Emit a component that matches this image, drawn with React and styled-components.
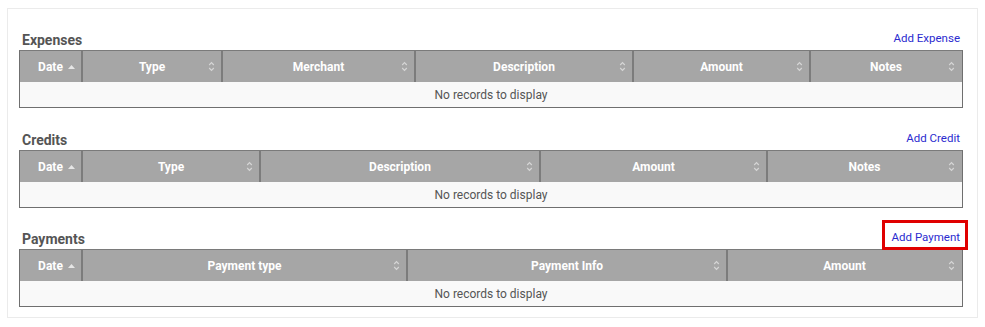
import React from "react";
import styled, { createGlobalStyle } from "styled-components";

const GlobalStyle = createGlobalStyle`
  body {
    margin: 0;
    background: #fff;
    font-family: Roboto, "Liberation Sans", Arial, sans-serif;
  }
`;

const Panel = styled.div`
  box-sizing: border-box;
  width: 971px;
  height: 310px;
  margin: 8px 0 0 7px;
  padding: 21px 14px 10px 11px;
  border: 1px solid #ebebeb;
  display: flex;
  flex-direction: column;
`;

const Section = styled.section`
  display: flex;
  flex-direction: column;
  margin-top: ${(p) => p.$gap || 0}px;
`;

const TitleRow = styled.div`
  display: flex;
  justify-content: space-between;
  align-items: flex-end;
  height: 20px;
  padding: 0 3px 0 3px;
`;

const Title = styled.h3`
  margin: 0 0 2px;
  font-size: 14px;
  font-weight: 700;
  color: #555;
  line-height: 15px;
`;

const AddLink = styled.a`
  position: relative;
  font-size: 11.5px;
  color: #2b2bcf;
  text-decoration: none;
  line-height: 14px;
  margin-bottom: 5px;
  cursor: pointer;
  ${(p) =>
    p.$highlighted &&
    `
    &::after {
      content: "";
      position: absolute;
      inset: -10px -8px -6px -10px;
      border: 3px solid #e00000;
      pointer-events: none;
    }
  `}
`;

const Table = styled.div`
  border: 1px solid #6f6f6f;
  border-top-color: #7a7a7a;
`;

const HeadRow = styled.div`
  display: grid;
  grid-template-columns: ${(p) => p.$cols};
  height: 31px;
  background: #a6a6a6;
`;

const Th = styled.div`
  display: grid;
  grid-template-columns: 1fr auto 1fr;
  align-items: center;
  padding: 0 6px 0 6px;
  border-left: 2px solid #7c7c7c;
  color: #fff;
  font-size: 12px;
  font-weight: 700;
  &:first-child {
    border-left: none;
  }
`;

const ThIcon = styled.span`
  justify-self: end;
  display: flex;
  align-items: center;
`;

const Empty = styled.div`
  height: 25px;
  background: #f9f9f9;
  color: #555;
  font-size: 12px;
  display: flex;
  align-items: center;
  justify-content: center;
`;

const SortAsc = () => (
  <svg width="7" height="4" viewBox="0 0 7 4">
    <path d="M0 4 L3.5 0 L7 4 Z" fill="#e6e6e6" />
  </svg>
);

const SortBoth = () => (
  <svg width="7" height="11" viewBox="0 0 7 11">
    <path
      d="M1.2 4 L3.5 1.7 L5.8 4 M1.2 7 L3.5 9.3 L5.8 7"
      fill="none"
      stroke="#d6d6d6"
      strokeWidth="1.2"
    />
  </svg>
);

const GridTable = ({ columns }) => (
  <Table>
    <HeadRow $cols={columns.map((c) => `${c.w}px`).join(" ")}>
      {columns.map((c, i) => (
        <Th key={c.label}>
          <span />
          <span>{c.label}</span>
          <ThIcon>{i === 0 ? <SortAsc /> : <SortBoth />}</ThIcon>
        </Th>
      ))}
    </HeadRow>
    <Empty>No records to display</Empty>
  </Table>
);

const sections = [
  {
    title: "Expenses",
    action: "Add Expense",
    gap: 0,
    columns: [
      { label: "Date", w: 61 },
      { label: "Type", w: 140 },
      { label: "Merchant", w: 193 },
      { label: "Description", w: 218 },
      { label: "Amount", w: 177 },
      { label: "Notes", w: 152 },
    ],
  },
  {
    title: "Credits",
    action: "Add Credit",
    gap: 22,
    columns: [
      { label: "Date", w: 61 },
      { label: "Type", w: 178 },
      { label: "Description", w: 280 },
      { label: "Amount", w: 227 },
      { label: "Notes", w: 195 },
    ],
  },
  {
    title: "Payments",
    action: "Add Payment",
    gap: 21,
    highlighted: true,
    columns: [
      { label: "Date", w: 61 },
      { label: "Payment type", w: 325 },
      { label: "Payment Info", w: 320 },
      { label: "Amount", w: 235 },
    ],
  },
];

export default function App() {
  return (
    <>
      <GlobalStyle />
      <Panel>
        {sections.map((s) => (
          <Section key={s.title} $gap={s.gap}>
            <TitleRow>
              <Title>{s.title}</Title>
              <AddLink $highlighted={s.highlighted}>{s.action}</AddLink>
            </TitleRow>
            <GridTable columns={s.columns} />
          </Section>
        ))}
      </Panel>
    </>
  );
}
